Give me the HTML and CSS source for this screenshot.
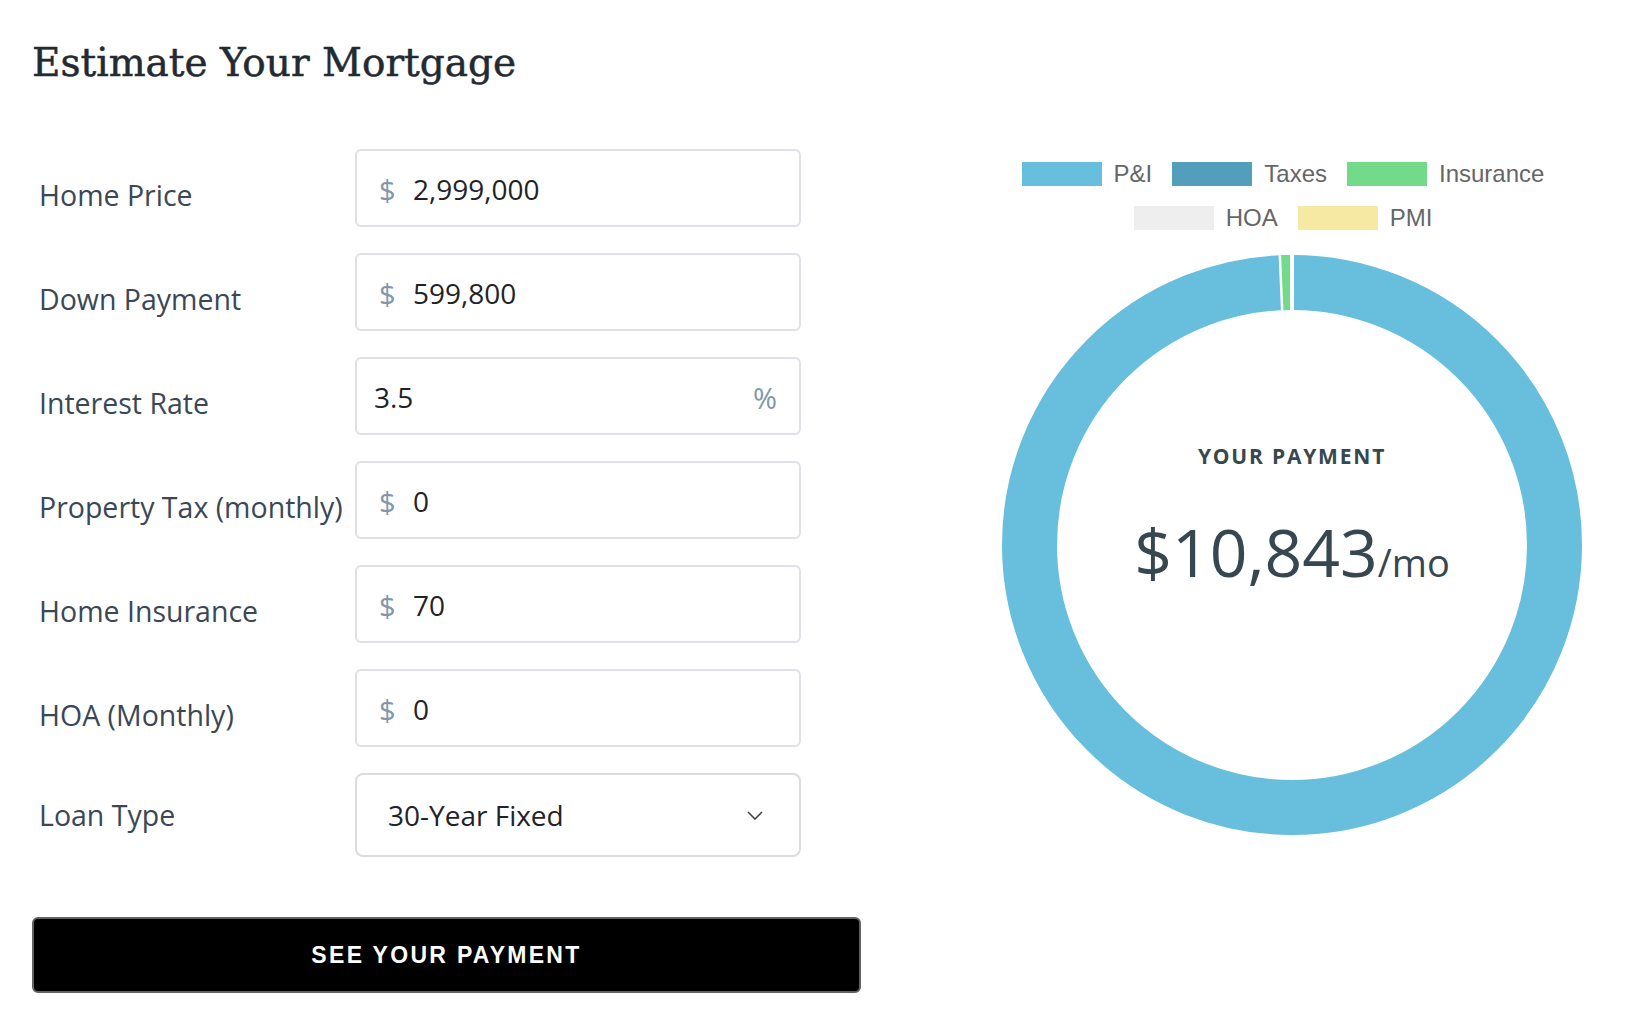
FILE: index.html
```html
<!DOCTYPE html>
<html lang="en">
<head>
<meta charset="utf-8">
<title>Estimate Your Mortgage</title>
<link rel="stylesheet" href="styles.css">
</head>
<body>
<div class="page">
  <h1 class="title">Estimate Your Mortgage</h1>
  <div class="content">
    <div class="form">
      <div class="row">
        <div class="label">Home Price</div>
        <div class="field"><span class="prefix">$</span><span class="value">2,999,000</span></div>
      </div>
      <div class="row">
        <div class="label">Down Payment</div>
        <div class="field"><span class="prefix">$</span><span class="value">599,800</span></div>
      </div>
      <div class="row">
        <div class="label">Interest Rate</div>
        <div class="field field-pct"><span class="value">3.5</span><span class="suffix">%</span></div>
      </div>
      <div class="row">
        <div class="label">Property Tax (monthly)</div>
        <div class="field"><span class="prefix">$</span><span class="value">0</span></div>
      </div>
      <div class="row">
        <div class="label">Home Insurance</div>
        <div class="field"><span class="prefix">$</span><span class="value">70</span></div>
      </div>
      <div class="row">
        <div class="label">HOA (Monthly)</div>
        <div class="field"><span class="prefix">$</span><span class="value">0</span></div>
      </div>
      <div class="row">
        <div class="label label-center">Loan Type</div>
        <div class="select">
          <span class="value">30-Year Fixed</span>
          <svg class="chevron" width="16" height="9" viewBox="0 0 16 9"><path d="M1 1 L8 8 L15 1" fill="none" stroke="#444" stroke-width="1.6"/></svg>
        </div>
      </div>
      <button class="submit" type="button">SEE YOUR PAYMENT</button>
    </div>

    <div class="chart">
      <div class="legend">
        <div class="legend-row">
          <div class="legend-item"><span class="swatch sw-pi"></span><span class="legend-text">P&amp;I</span></div>
          <div class="legend-item"><span class="swatch sw-tax"></span><span class="legend-text">Taxes</span></div>
          <div class="legend-item"><span class="swatch sw-ins"></span><span class="legend-text">Insurance</span></div>
        </div>
        <div class="legend-row">
          <div class="legend-item"><span class="swatch sw-hoa"></span><span class="legend-text">HOA</span></div>
          <div class="legend-item"><span class="swatch sw-pmi"></span><span class="legend-text">PMI</span></div>
        </div>
      </div>
      <div class="donut">
        <svg width="580" height="580" viewBox="0 0 580 580">
          <circle cx="290" cy="290" r="262.5" fill="none" stroke="#67bfdd" stroke-width="55"/>
          <path d="M277.85 0.25 A290 290 0 0 1 290 0 L290 55 A235 235 0 0 0 280.16 55.21 Z" fill="#72da88"/>
          <line x1="290" y1="0" x2="290" y2="55" stroke="#ffffff" stroke-width="4"/>
          <line x1="277.85" y1="0.25" x2="280.16" y2="55.21" stroke="#ffffff" stroke-width="2.5"/>
        </svg>
        <div class="donut-center">
          <div class="pay-label">YOUR PAYMENT</div>
          <div class="pay-amount">$10,843<span class="pay-unit">/mo</span></div>
        </div>
      </div>
    </div>
  </div>
</div>
</body>
</html>
```

FILE: styles.css
```css
* { box-sizing: border-box; }

html, body {
  margin: 0;
  padding: 0;
  background: #ffffff;
}

.page {
  padding: 43px 0 0 32px;
  font-family: "Open Sans", "Noto Sans", sans-serif;
}

.title {
  margin: 0;
  font-family: "DejaVu Serif", "Liberation Serif", serif;
  font-weight: normal;
  font-size: 39px;
  line-height: 39px;
  color: #232a31;
  -webkit-text-stroke: 0.5px #232a31;
}

.content {
  margin-top: 67px;
  display: flex;
  align-items: flex-start;
}

.form {
  width: 829px;
  display: flex;
  flex-direction: column;
  gap: 26px;
}

.row {
  display: grid;
  grid-template-columns: 323px 446px;
  align-items: center;
}

.label {
  padding-left: 7px;
  padding-top: 14px;
  font-size: 28.5px;
  line-height: 38px;
  color: #3a4855;
  white-space: nowrap;
}

.label-center {
  padding-top: 0;
}

.field {
  height: 78px;
  border: 2px solid #dee2e6;
  border-radius: 6px;
  display: flex;
  align-items: center;
  padding: 2px 22px 0 22px;
}

.field-pct {
  justify-content: space-between;
  padding-left: 17px;
}

.prefix {
  display: inline-block;
  width: 34px;
  font-size: 29px;
  color: #8196a9;
}

.suffix {
  font-size: 29px;
  color: #8196a9;
}

.value {
  font-size: 28px;
  color: #1f2327;
}

.select {
  height: 84px;
  border: 2px solid #dcdcdc;
  border-radius: 8px;
  display: flex;
  align-items: center;
  justify-content: space-between;
  padding: 0 36px 0 31px;
}

.chevron {
  display: block;
}

.submit {
  margin-top: 34px;
  width: 829px;
  height: 76px;
  background: #000000;
  border: 2px solid #626262;
  border-radius: 6px;
  color: #ffffff;
  font-family: "Liberation Sans", Arial, sans-serif;
  font-weight: bold;
  font-size: 23px;
  letter-spacing: 2.3px;
  padding: 0;
}

.chart {
  margin-left: 141px;
  width: 580px;
  padding-top: 3px;
}

.legend {
  padding-right: 18px;
}

.legend-row {
  height: 44px;
  display: flex;
  justify-content: center;
  align-items: center;
  gap: 20px;
}

.legend-item {
  display: flex;
  align-items: center;
}

.swatch {
  display: block;
  width: 80px;
  height: 24px;
  margin-right: 12px;
}

.sw-pi { background: #67bfdd; }
.sw-tax { background: #539fbb; }
.sw-ins { background: #72da88; }
.sw-hoa { background: #eeeeee; }
.sw-pmi { background: #f6e9a4; }

.legend-text {
  font-family: "Liberation Sans", Arial, sans-serif;
  font-size: 24px;
  line-height: 24px;
  color: #666666;
}

.donut {
  position: relative;
  margin-top: 15px;
  width: 580px;
  height: 580px;
}

.donut svg {
  display: block;
}

.donut-center {
  position: absolute;
  left: 0;
  top: 191px;
  width: 580px;
  text-align: center;
  color: #37474f;
}

.pay-label {
  font-weight: bold;
  font-size: 21px;
  line-height: 21px;
  letter-spacing: 1.8px;
}

.pay-amount {
  margin-top: 51px;
  font-size: 66px;
  line-height: 66px;
}

.pay-unit {
  font-size: 38px;
  line-height: 1;
}
```
